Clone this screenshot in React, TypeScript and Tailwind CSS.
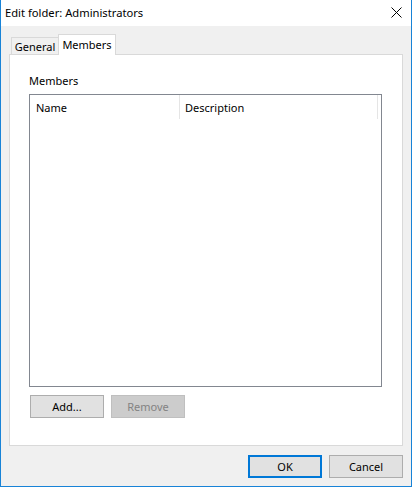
import React from "react";

const font = { fontFamily: '"Noto Sans", "Open Sans", sans-serif' };

export default function App() {
  return (
    <div
      className="w-[412px] h-[487px] flex flex-col bg-[#f0f0f0] border-x border-b border-[#1883d7] text-[11px] text-black leading-[16px]"
      style={font}
    >
      {/* title bar */}
      <div className="h-[26px] bg-white flex items-center justify-between pl-[4px] pr-[9px] shrink-0">
        <span className="text-[11.2px]">Edit folder: Administrators</span>
        <svg width="11" height="11" viewBox="0 0 11 11" className="mb-[1px]">
          <path d="M0.5 0.5 L10.5 10.5 M10.5 0.5 L0.5 10.5" stroke="#000" strokeWidth="1" fill="none" />
        </svg>
      </div>

      {/* body */}
      <div className="flex-1 flex flex-col px-[8px] pt-[8px]">
        {/* tabs */}
        <div className="h-[20px] flex items-end pl-[2px] relative z-10">
          <div className="w-[47px] h-[17px] border-t border-l border-[#d9d9d9] bg-[#f0f0f0] flex items-center justify-center pt-[2px]">
            General
          </div>
          <div className="w-[58px] h-[21px] -mb-[1px] border-t border-x border-[#d9d9d9] bg-white flex items-start justify-center pt-[2px]">
            Members
          </div>
        </div>

        {/* panel */}
        <div className="h-[392px] border border-[#d9d9d9] bg-white flex flex-col pl-[19px] pr-[18px] pt-[18px]">
          <div className="h-[16px]">Members</div>
          <div className="mt-[5px] h-[293px] w-[353px] border border-[#828790] bg-white flex flex-col">
            <div className="h-[24px] flex items-stretch">
              <div className="w-[150px] flex items-center pl-[6px] pt-[1px] border-r border-[#e5e5e5]">
                Name
              </div>
              <div className="w-[198px] flex items-center pl-[5px] pt-[1px] border-r border-[#e5e5e5]">
                Description
              </div>
            </div>
          </div>
          <div className="mt-[8px] flex gap-[7px] pl-[1px]">
            <div className="w-[74px] h-[23px] bg-[#e1e1e1] border border-[#adadad] flex items-center justify-center">
              Add...
            </div>
            <div className="w-[74px] h-[23px] bg-[#cccccc] border border-[#bfbfbf] text-[#838383] flex items-center justify-center">
              Remove
            </div>
          </div>
        </div>

        {/* bottom buttons */}
        <div className="mt-[9px] flex justify-end gap-[7px]">
          <div className="w-[74px] h-[23px] bg-[#e1e1e1] border-2 border-[#0078d7] flex items-center justify-center">
            OK
          </div>
          <div className="w-[74px] h-[23px] bg-[#e1e1e1] border border-[#adadad] flex items-center justify-center">
            Cancel
          </div>
        </div>
      </div>
    </div>
  );
}
